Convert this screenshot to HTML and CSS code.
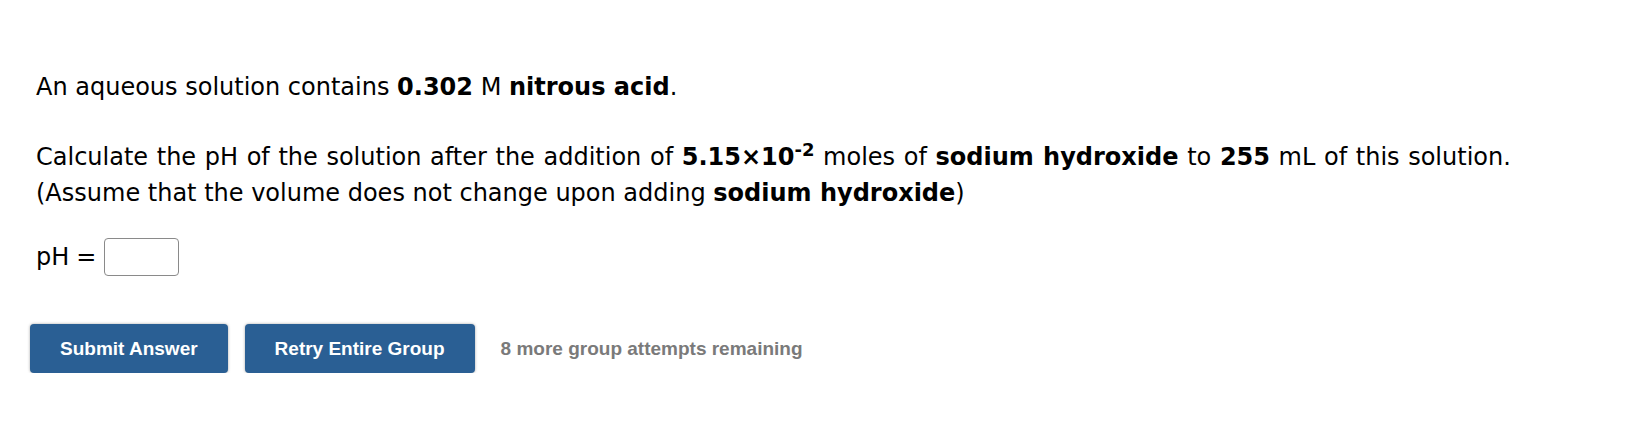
FILE: index.html
```html
<!DOCTYPE html>
<html>
<head>
<meta charset="utf-8">
<link rel="stylesheet" href="styles.css">
</head>
<body>
<div class="question">
  <p class="intro">An aqueous solution contains <b>0.302</b> M <b>nitrous acid</b>.</p>
  <p class="task"><span class="wide">Calculate the pH of the solution after the addition of <b>5.15×10<sup>-2</sup></b> moles of <b>sodium hydroxide</b> to <b>255</b> mL of this solution.</span><br>(Assume that the volume does not change upon adding <b>sodium hydroxide</b>)</p>
  <div class="answer">
    <span class="label">pH</span>
    <span class="eq">=</span>
    <input class="field" type="text">
  </div>
  <div class="actions">
    <button class="btn">Submit Answer</button>
    <button class="btn">Retry Entire Group</button>
    <span class="remaining">8 more group attempts remaining</span>
  </div>
</div>
</body>
</html>
```

FILE: styles.css
```css
html, body {
  margin: 0;
  padding: 0;
  background: #fff;
}
.question {
  padding: 69px 36px 0 36px;
  font-family: "DejaVu Sans", Verdana, sans-serif;
  font-size: 24px;
  color: #000;
}
.intro {
  margin: 0;
  line-height: 36px;
}
.task {
  margin: 34px 0 0 0;
  line-height: 36px;
}
.wide {
  word-spacing: 1px;
}
.task sup {
  font-size: 18px;
  line-height: 0;
}
.answer {
  display: flex;
  align-items: center;
  margin-top: 27px;
  line-height: 36px;
}
.eq {
  margin: 0 8px 0 7px;
}
.field {
  width: 75px;
  height: 38px;
  box-sizing: border-box;
  border: 1px solid #8a8a8a;
  border-radius: 4px;
  padding: 0;
  margin: 0;
}
.actions {
  display: flex;
  align-items: center;
  margin-top: 48px;
  margin-left: -6px;
}
.btn {
  font-family: "Liberation Sans", Arial, sans-serif;
  font-weight: bold;
  font-size: 19px;
  color: #fff;
  background: #2a5f94;
  border: none;
  border-radius: 4px;
  height: 49px;
  padding: 0 30px;
  margin-right: 17px;
  box-shadow: 0 0 3px rgba(0,0,0,0.35);
}
.remaining {
  font-family: "Liberation Sans", Arial, sans-serif;
  font-weight: bold;
  font-size: 19px;
  color: #7a7a7a;
  margin-left: 9px;
}
```
